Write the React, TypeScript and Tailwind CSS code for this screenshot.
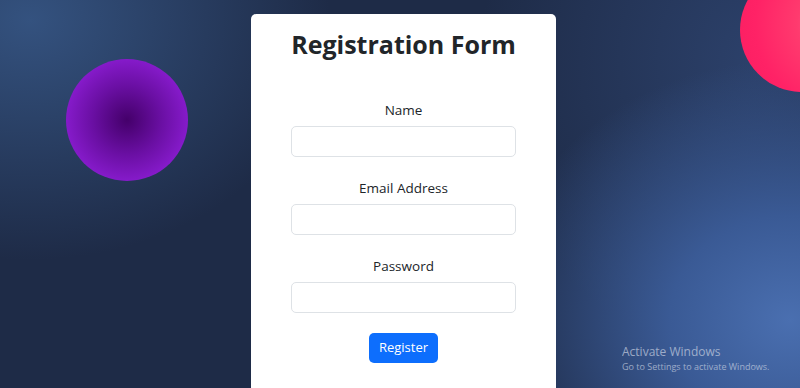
import React from "react";

function Field({ label, type }: { label: string; type: string }) {
  return (
    <div className="flex flex-col items-center">
      <label className="text-[13.5px] leading-[20px] text-[#212529]">{label}</label>
      <input
        type={type}
        className="mt-[6px] h-[31px] w-[225px] rounded-[5px] border border-[#dee2e6] bg-white outline-none"
      />
    </div>
  );
}

export default function App() {
  return (
    <div
      className="relative h-[388px] w-[800px] overflow-hidden"
      style={{
        fontFamily: '"Open Sans", "Noto Sans", sans-serif',
        background:
          "radial-gradient(ellipse 300px 260px at 790px 320px, #4a6fb0 0%, #3a5a95 40%, rgba(30,43,71,0) 100%), radial-gradient(ellipse 300px 240px at 30px 20px, #34527f 0%, rgba(30,43,71,0) 100%), radial-gradient(ellipse 280px 300px at 760px 60px, #2c416b 0%, rgba(30,43,71,0) 100%), #1e2b47",
      }}
    >
      {/* decorative circles */}
      <div
        className="absolute left-[66px] top-[59px] h-[122px] w-[122px] rounded-full"
        style={{ background: "radial-gradient(circle at 50% 50%, #44006a 0%, #6a0fa3 40%, #8e1ed6 80%, #9420dc 100%)" }}
      />
      <div
        className="absolute left-[740px] top-[-32px] h-[124px] w-[124px] rounded-full"
        style={{ background: "radial-gradient(circle at 80% 45%, #ff6f8f 0%, #ff3a6e 35%, #ff2266 70%, #f91d60 100%)" }}
      />

      <div className="flex justify-center pl-[7px] pt-[14px]">
        <div className="h-[400px] w-[305px] rounded-[5px] bg-white pt-[14px]">
          <h2 className="text-center text-[25px] font-bold leading-[32px] text-[#212529]">Registration Form</h2>
          <div className="mt-[40px] flex flex-col gap-[21px]">
            <Field label="Name" type="text" />
            <Field label="Email Address" type="email" />
            <Field label="Password" type="password" />
          </div>
          <div className="mt-[20px] flex justify-center">
            <button className="h-[30px] rounded-[5px] bg-[#0d6efd] px-[10px] text-[13px] text-white">Register</button>
          </div>
        </div>
      </div>

      <div className="absolute left-[622px] top-[344px] text-[#c7d0e0] opacity-70">
        <div className="text-[12px] leading-[16px]">Activate Windows</div>
        <div className="text-[9px] leading-[13px]">Go to Settings to activate Windows.</div>
      </div>
    </div>
  );
}
